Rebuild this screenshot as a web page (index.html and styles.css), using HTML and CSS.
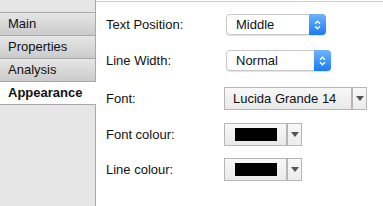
FILE: index.html
```html
<!DOCTYPE html>
<html lang="en">
<head>
  <meta charset="UTF-8">
  <title>Appearance</title>
  <link rel="stylesheet" href="styles.css">
</head>
<body>
  <div class="prefs">
    <!-- TABS -->
    <div class="sidebar">
      <div class="tab">Main</div>
      <div class="tab">Properties</div>
      <div class="tab">Analysis</div>
      <div class="tab selected">Appearance</div>
    </div>

    <!-- SETTINGS -->
    <div class="panel">
      <div class="row">
        <span class="label">Text Position:</span>
        <div class="popup short">
          <span class="value">Middle</span>
          <span class="stepper">
            <svg width="9" height="12" viewBox="-4.5 -6 9 12"><path d="M-2.5 -1.2 L0 -3.8 L2.5 -1.2 M-2.5 1.2 L0 3.8 L2.5 1.2" fill="none" stroke="#fff" stroke-width="1.3"/></svg>
          </span>
        </div>
      </div>

      <div class="row">
        <span class="label">Line Width:</span>
        <div class="popup long">
          <span class="value">Normal</span>
          <span class="stepper">
            <svg width="9" height="12" viewBox="-4.5 -6 9 12"><path d="M-2.5 -1.2 L0 -3.8 L2.5 -1.2 M-2.5 1.2 L0 3.8 L2.5 1.2" fill="none" stroke="#fff" stroke-width="1.3"/></svg>
          </span>
        </div>
      </div>

      <div class="row font-row">
        <span class="label">Font:</span>
        <div class="combo">
          <span class="field font-name">Lucida Grande 14</span>
          <span class="drop"><span class="arrow"></span></span>
        </div>
      </div>

      <div class="row">
        <span class="label">Font colour:</span>
        <div class="combo">
          <span class="field well"><span class="swatch"></span></span>
          <span class="drop"><span class="arrow"></span></span>
        </div>
      </div>

      <div class="row last-row">
        <span class="label">Line colour:</span>
        <div class="combo">
          <span class="field well"><span class="swatch"></span></span>
          <span class="drop"><span class="arrow"></span></span>
        </div>
      </div>
    </div>
  </div>
</body>
</html>
```

FILE: styles.css
```css
body {
  margin: 0;
  font-family: "Liberation Sans", Arial, sans-serif;
  font-size: 13px;
  color: #111;
  background: #fff;
}

.prefs {
  display: flex;
  height: 206px;
}

/* Left tab column */
.sidebar {
  width: 95px;
  flex-shrink: 0;
  padding-top: 12px;
  background: #e6e6e6;
  border-right: 1px solid #a9a9a9;
}

.tab {
  height: 22px;
  line-height: 22px;
  padding-left: 8px;
  border-top: 1px solid #a8a8a8;
  background: linear-gradient(#e6e6e6, #cbcbcb);
}

.tab:last-child {
  border-bottom: 1px solid #a8a8a8;
}

.tab.selected {
  background: #fff;
  font-weight: bold;
  margin-right: -1px;
  position: relative;
}

/* Right settings panel */
.panel {
  flex: 1;
  padding: 11px 0 0 10px;
  border-top: 1px solid #bcd2ea;
  margin-top: 1px;
  display: flex;
  flex-direction: column;
  gap: 13px;
}

.row {
  display: flex;
  align-items: center;
  height: 23px;
}

.font-row {
  margin-top: 2px;
}

.last-row {
  margin-top: -1px;
}

.label {
  width: 118px;
  flex-shrink: 0;
}

.popup {
  display: flex;
  align-items: center;
  height: 19px;
  margin-left: 2px;
  border: 1px solid #c8c8c8;
  border-radius: 4px;
  background: #fff;
  box-shadow: 0 1px 1px rgba(0, 0, 0, 0.12);
}

.popup.short {
  width: 98px;
}

.popup.long {
  width: 103px;
}

.popup .value {
  flex: 1;
  padding-left: 9px;
}

.stepper {
  width: 17px;
  height: 21px;
  margin: -1px -1px -1px 0;
  border-radius: 0 4px 4px 0;
  background: linear-gradient(#6db3fb, #1a7cf6);
  display: flex;
  align-items: center;
  justify-content: center;
}

.combo {
  display: flex;
  height: 23px;
  border: 1px solid #b6b6b6;
  box-sizing: border-box;
}

.field {
  display: flex;
  align-items: center;
  background: linear-gradient(#f8f8f8, #e9e9e9);
}

.font-name {
  width: 118px;
  padding-left: 8px;
  white-space: nowrap;
}

.well {
  width: 61px;
  justify-content: center;
}

.swatch {
  width: 42px;
  height: 13px;
  background: #000;
}

.drop {
  width: 13px;
  border-left: 2px solid #b6b6b6;
  background: linear-gradient(#f8f8f8, #ececec);
  display: flex;
  align-items: center;
  justify-content: center;
}

.arrow {
  width: 0;
  height: 0;
  border-left: 4px solid transparent;
  border-right: 4px solid transparent;
  border-top: 5px solid #555;
}
```
